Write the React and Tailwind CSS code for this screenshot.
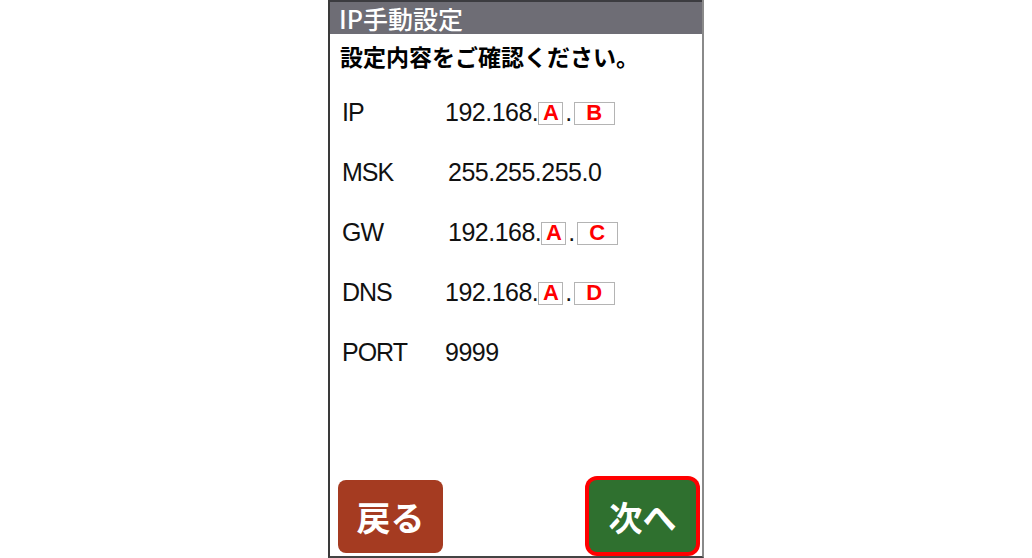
import React from 'react';

const sans = { fontFamily: '"Liberation Sans", Arial, sans-serif' };
const jp = { fontFamily: '"Noto Sans CJK JP", sans-serif' };

const Box = ({ children, wide }) => (
  <span
    className={`inline-flex items-center justify-center h-[23px] border border-[#b4b4b4] text-[#ff0000] font-bold text-[22px] leading-none tracking-normal ${wide ? 'w-[41px]' : 'w-[25px]'}`}
    style={sans}
  >
    {children}
  </span>
);

const Row = ({ label, children, indent }) => (
  <div className="h-[60px] flex items-center text-[25px] tracking-[-0.5px] text-[#111]" style={sans}>
    <span className="w-[103px] tracking-[-1px]">{label}</span>
    <span className={`flex items-center ${indent ? 'pl-[3px]' : ''}`}>{children}</span>
  </div>
);

const Addr = ({ last }) => (
  <>
    <span>192.168.</span>
    <Box>A</Box>
    <span className="px-[2px]">.</span>
    <Box wide>{last}</Box>
  </>
);

export default function App() {
  return (
    <div className="w-full h-[558px] bg-white flex justify-center">
      <div className="w-[376px] h-[558px] flex flex-col border-l-2 border-l-[#3a3a3a] border-r-2 border-r-[#8a8a8a] border-b-2 border-b-[#444]">
        {/* title bar */}
        <div
          className="h-[34px] bg-[#6e6d75] border-t-2 border-t-[#3c3c40] flex items-center pl-[9px] text-white text-[25px] font-medium leading-none"
          style={jp}
        >
          IP手動設定
        </div>
        <div className="h-[49px] pl-[10px] pt-[5px] text-[23px] font-bold text-black" style={jp}>
          設定内容をご確認ください。
        </div>

        <div className="pl-[12px]">
          <Row label="IP"><Addr last="B" /></Row>
          <Row label="MSK" indent>255.255.255.0</Row>
          <Row label="GW" indent><Addr last="C" /></Row>
          <Row label="DNS"><Addr last="D" /></Row>
          <Row label="PORT">9999</Row>
        </div>

        {/* buttons */}
        <div className="mt-auto h-[80px] flex items-center justify-between pl-[8px] pr-[2px]" style={jp}>
          <button className="w-[105px] h-[73px] rounded-[8px] bg-[#a53b21] text-white text-[34px] font-bold">
            戻る
          </button>
          <div className="w-[115px] h-[80px] rounded-[12px] bg-[#ff0000] p-[4px]">
            <button className="w-full h-full rounded-[8px] bg-[#2f702f] text-white text-[34px] font-bold">
              次へ
            </button>
          </div>
        </div>
      </div>
    </div>
  );
}
